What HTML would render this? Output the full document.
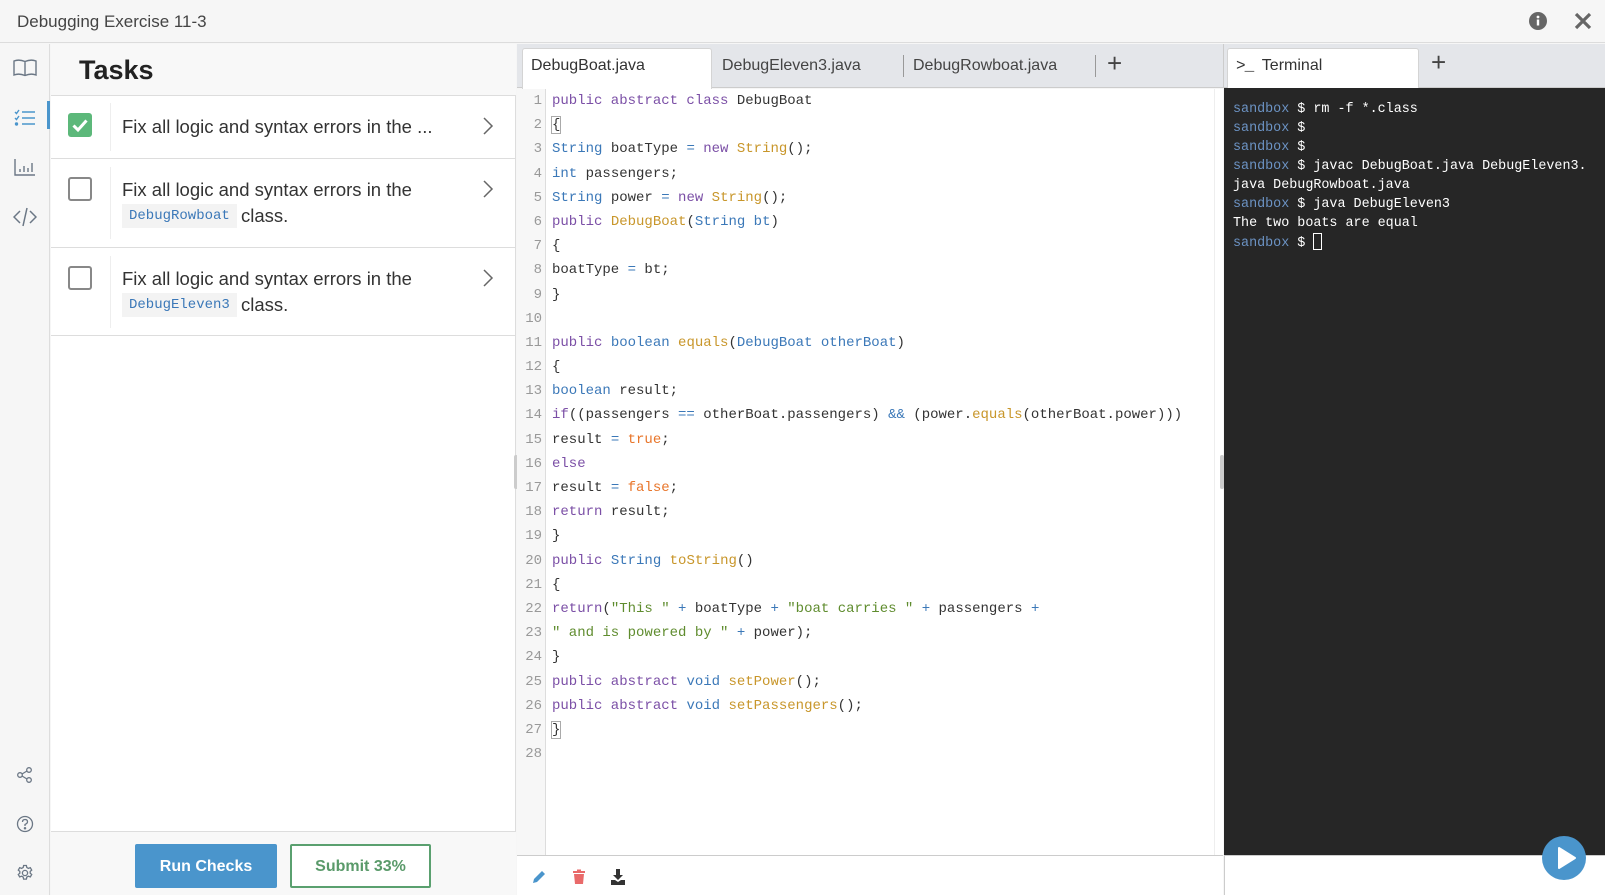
<!DOCTYPE html>
<html><head><meta charset="utf-8"><style>
*{box-sizing:border-box;margin:0;padding:0}
body{width:1605px;height:895px;overflow:hidden;background:#f6f6f6;font-family:"Liberation Sans",sans-serif;color:#333;position:relative}
.abs{position:absolute}
.mono{font-family:"Liberation Mono","DejaVu Sans Mono",monospace}
.kw{color:#7b4fa6}.ty{color:#3b78b8}.fn{color:#c8962a}.st{color:#5f8c2e}.bo{color:#e8752a}.op{color:#3b78b8}
.code div{height:24.2px;line-height:24.2px;white-space:pre}
.gut div{height:24.2px;line-height:24.2px;text-align:right;padding-right:4px}
.term div{height:19px;line-height:19px;white-space:pre}
.sb{color:#6c93c4}
</style></head><body>
<div class="abs" style="left:0;top:0;width:1605px;height:43px;background:#f6f6f6;border-bottom:1px solid #dcdcdc"></div>
<div class="abs" style="left:17px;top:12px;font-size:17px;color:#444">Debugging Exercise 11-3</div>
<svg class="abs" style="left:1528px;top:11px" width="20" height="20" viewBox="0 0 20 20"><circle cx="10" cy="10" r="9" fill="#666"/><rect x="8.8" y="8.5" width="2.4" height="6" fill="#fff"/><circle cx="10" cy="6" r="1.4" fill="#fff"/></svg>
<svg class="abs" style="left:1573px;top:11px" width="20" height="20" viewBox="0 0 20 20"><path d="M3 3L17 17M17 3L3 17" stroke="#666" stroke-width="3.2"/></svg>

<div class="abs" style="left:0;top:44px;width:50px;height:851px;background:#f6f6f6;border-right:1px solid #ddd"></div>
<svg class="abs" style="left:13px;top:59px" width="24" height="18" viewBox="0 0 24 18" fill="none" stroke="#6b7785" stroke-width="1.4"><path d="M1 2Q6 0 12 2.5Q18 0 23 2V16Q18 14 12 16.5Q6 14 1 16Z M12 2.5V16.5"/></svg>
<svg class="abs" style="left:14px;top:109px" width="22" height="18" viewBox="0 0 22 18" fill="none" stroke="#4a95cc" stroke-width="1.4"><path d="M1 3l1.5 1.5L5 1M1 9l1.5 1.5L5 7M8 3H21M8 9H21M8 15H21"/><circle cx="2.5" cy="15" r="1" fill="#4a95cc"/></svg>
<div class="abs" style="left:47px;top:101px;width:3px;height:28px;background:#4a95cc"></div>
<svg class="abs" style="left:14px;top:158px" width="22" height="18" viewBox="0 0 22 18" fill="none" stroke="#6b7785" stroke-width="1.4"><path d="M1 1V17H21M6 14V11M10 14V8M14 14V10M18 14V5"/></svg>
<svg class="abs" style="left:13px;top:207px" width="24" height="20" viewBox="0 0 24 20" fill="none" stroke="#6b7785" stroke-width="1.5"><path d="M7 4L1 10L7 16M17 4L23 10L17 16M14 1L10 19"/></svg>
<svg class="abs" style="left:16px;top:766px" width="18" height="18" viewBox="0 0 18 18" fill="none" stroke="#6b7785" stroke-width="1.3"><circle cx="4" cy="9" r="2.3"/><circle cx="13" cy="4" r="2.3"/><circle cx="13" cy="14" r="2.3"/><path d="M6 8L11 5M6 10L11 13"/></svg>
<svg class="abs" style="left:16px;top:815px" width="18" height="18" viewBox="0 0 18 18" fill="none" stroke="#6b7785" stroke-width="1.3"><circle cx="9" cy="9" r="7.5"/><path d="M6.5 7Q6.5 4.5 9 4.5Q11.5 4.5 11.5 6.8Q11.5 8.5 9 9.5V11"/><circle cx="9" cy="13.3" r=".6" fill="#6b7785"/></svg>
<svg class="abs" style="left:16px;top:864px" width="18" height="18" viewBox="0 0 18 18" fill="none" stroke="#6b7785" stroke-width="1.3"><circle cx="9" cy="9" r="2.6"/><path d="M7.6 1.5h2.8l.4 2 1.6.9 1.9-.7 1.4 2.4-1.5 1.3v1.8l1.5 1.3-1.4 2.4-1.9-.7-1.6.9-.4 2H7.6l-.4-2-1.6-.9-1.9.7-1.4-2.4 1.5-1.3V7.4L2.3 6.1l1.4-2.4 1.9.7 1.6-.9z"/></svg>

<div class="abs" style="left:51px;top:44px;width:465px;height:851px;background:#fff;border-right:1px solid #ddd"></div>
<div class="abs" style="left:51px;top:44px;width:465px;height:52px;background:#f8f8f8;border-bottom:1px solid #ddd"></div>
<div class="abs" style="left:79px;top:55px;font-size:27px;font-weight:bold;color:#222">Tasks</div>
<div class="abs" style="left:51px;top:158px;width:465px;height:1px;background:#ddd"></div>
<div class="abs" style="left:110px;top:103px;width:1px;height:48px;background:#eee"></div>
<div class="abs" style="left:68px;top:113px;width:24px;height:24px;background:#5cb87a;border-radius:3px"></div>
<svg class="abs" style="left:68px;top:113px" width="24" height="24" viewBox="0 0 24 24"><path d="M5.5 12.5L10 17L18.5 7.5" stroke="#fff" stroke-width="3" fill="none"/></svg>
<div class="abs" style="left:122px;top:116px;font-size:18.5px;color:#333">Fix all logic and syntax errors in the ...</div>
<svg class="abs" style="left:482px;top:116px" width="12" height="20" viewBox="0 0 12 20"><path d="M2 2L10 10L2 18" stroke="#666" stroke-width="1.5" fill="none"/></svg>
<div class="abs" style="left:51px;top:247px;width:465px;height:1px;background:#ddd"></div>
<div class="abs" style="left:110px;top:167px;width:1px;height:72px;background:#eee"></div>
<div class="abs" style="left:68px;top:177px;width:24px;height:24px;border:2px solid #888;border-radius:3px"></div>
<div class="abs" style="left:122px;top:179px;font-size:18.5px;color:#333">Fix all logic and syntax errors in the</div>
<div class="abs mono" style="left:122px;top:204px;height:24px;line-height:24px;padding:0 7px;background:#f3f3f3;font-size:14px;color:#3b78b8">DebugRowboat</div>
<div class="abs" style="left:241px;top:205px;font-size:18.5px;color:#333">class.</div>
<svg class="abs" style="left:482px;top:179px" width="12" height="20" viewBox="0 0 12 20"><path d="M2 2L10 10L2 18" stroke="#666" stroke-width="1.5" fill="none"/></svg>
<div class="abs" style="left:51px;top:335px;width:465px;height:1px;background:#ddd"></div>
<div class="abs" style="left:110px;top:256px;width:1px;height:72px;background:#eee"></div>
<div class="abs" style="left:68px;top:266px;width:24px;height:24px;border:2px solid #888;border-radius:3px"></div>
<div class="abs" style="left:122px;top:268px;font-size:18.5px;color:#333">Fix all logic and syntax errors in the</div>
<div class="abs mono" style="left:122px;top:293px;height:24px;line-height:24px;padding:0 7px;background:#f3f3f3;font-size:14px;color:#3b78b8">DebugEleven3</div>
<div class="abs" style="left:241px;top:294px;font-size:18.5px;color:#333">class.</div>
<svg class="abs" style="left:482px;top:268px" width="12" height="20" viewBox="0 0 12 20"><path d="M2 2L10 10L2 18" stroke="#666" stroke-width="1.5" fill="none"/></svg>
<div class="abs" style="left:51px;top:831px;width:465px;height:64px;background:#f8f8f8;border-top:1px solid #ddd"></div>
<div class="abs" style="left:135px;top:844px;width:142px;height:44px;background:#4a95cc;border-radius:2px;color:#fff;font-size:16px;font-weight:bold;text-align:center;line-height:46px">Run Checks</div>
<div class="abs" style="left:290px;top:844px;width:141px;height:44px;border:2px solid #5aa06f;border-radius:2px;color:#5a9a6a;font-size:16px;font-weight:bold;text-align:center;line-height:42px;background:#fff">Submit 33%</div>
<div class="abs" style="left:514px;top:455px;width:4px;height:34px;background:#ccc;border-radius:2px"></div>

<div class="abs" style="left:517px;top:44px;width:706px;height:44px;background:#e4e6ea;border-bottom:1px solid #ccc"></div>
<div class="abs" style="left:522px;top:48px;width:190px;height:41px;background:#fff;border:1px solid #d4d4d4;border-bottom:none;border-radius:3px 3px 0 0"></div>
<div class="abs" style="left:531px;top:57px;font-size:16px;color:#333">DebugBoat.java</div>
<div class="abs" style="left:722px;top:57px;font-size:16px;color:#444">DebugEleven3.java</div>
<div class="abs" style="left:903px;top:55px;width:1px;height:22px;background:#999"></div>
<div class="abs" style="left:913px;top:57px;font-size:16px;color:#444">DebugRowboat.java</div>
<div class="abs" style="left:1095px;top:55px;width:1px;height:22px;background:#999"></div>
<div class="abs" style="left:1107px;top:48px;font-size:26px;color:#444;font-weight:300">+</div>
<div class="abs" style="left:517px;top:89px;width:706px;height:766px;background:#fff"></div>
<div class="abs" style="left:517px;top:89px;width:29px;height:766px;background:#f7f7f7;border-right:1px solid #ddd"></div>
<div class="abs" style="left:1214px;top:89px;width:1px;height:766px;background:#eee"></div>
<div class="abs gut mono" style="left:517px;top:89px;width:29px;font-size:14px;color:#999">
<div>1</div><div>2</div><div>3</div><div>4</div><div>5</div><div>6</div><div>7</div><div>8</div><div>9</div><div>10</div><div>11</div><div>12</div><div>13</div><div>14</div><div>15</div><div>16</div><div>17</div><div>18</div><div>19</div><div>20</div><div>21</div><div>22</div><div>23</div><div>24</div><div>25</div><div>26</div><div>27</div><div>28</div></div>
<div class="abs code mono" style="left:552px;top:89px;font-size:14px;color:#333">
<div><span class="kw">public abstract class</span> DebugBoat</div>
<div><span style="outline:1px solid #aaa">{</span></div>
<div><span class="ty">String</span> boatType <span class="op">=</span> <span class="kw">new</span> <span class="fn">String</span>();</div>
<div><span class="ty">int</span> passengers;</div>
<div><span class="ty">String</span> power <span class="op">=</span> <span class="kw">new</span> <span class="fn">String</span>();</div>
<div><span class="kw">public</span> <span class="fn">DebugBoat</span>(<span class="ty">String bt</span>)</div>
<div>{</div>
<div>boatType <span class="op">=</span> bt;</div>
<div>}</div>
<div> </div>
<div><span class="kw">public</span> <span class="ty">boolean</span> <span class="fn">equals</span>(<span class="ty">DebugBoat otherBoat</span>)</div>
<div>{</div>
<div><span class="ty">boolean</span> result;</div>
<div><span class="kw">if</span>((passengers <span class="op">==</span> otherBoat.passengers) <span class="op">&amp;&amp;</span> (power.<span class="fn">equals</span>(otherBoat.power)))</div>
<div>result <span class="op">=</span> <span class="bo">true</span>;</div>
<div><span class="kw">else</span></div>
<div>result <span class="op">=</span> <span class="bo">false</span>;</div>
<div><span class="kw">return</span> result;</div>
<div>}</div>
<div><span class="kw">public</span> <span class="ty">String</span> <span class="fn">toString</span>()</div>
<div>{</div>
<div><span class="kw">return</span>(<span class="st">"This "</span> <span class="op">+</span> boatType <span class="op">+</span> <span class="st">"boat carries "</span> <span class="op">+</span> passengers <span class="op">+</span></div>
<div><span class="st">" and is powered by "</span> <span class="op">+</span> power);</div>
<div>}</div>
<div><span class="kw">public abstract</span> <span class="ty">void</span> <span class="fn">setPower</span>();</div>
<div><span class="kw">public abstract</span> <span class="ty">void</span> <span class="fn">setPassengers</span>();</div>
<div><span style="outline:1px solid #aaa">}</span></div>
<div> </div>
</div>
<div class="abs" style="left:517px;top:855px;width:706px;height:40px;background:#fff;border-top:1px solid #ccc"></div>
<svg class="abs" style="left:531px;top:869px" width="16" height="16" viewBox="0 0 16 16"><path d="M2 14l1-4 8-8 3 3-8 8z" fill="#4a95cc"/></svg>
<svg class="abs" style="left:571px;top:869px" width="16" height="16" viewBox="0 0 16 16"><path d="M2 2h12v2H2zM6 0.5h4v2H6zM3 5h10l-1 10H4z" fill="#e96a6a"/></svg>
<svg class="abs" style="left:610px;top:869px" width="16" height="16" viewBox="0 0 16 16"><path d="M6 0h4v6h3l-5 5-5-5h3z M1 11h4l3 2 3-2h4v5H1z" fill="#333"/></svg>
<div class="abs" style="left:1220px;top:455px;width:4px;height:34px;background:#ccc;border-radius:2px"></div>

<div class="abs" style="left:1223px;top:44px;width:382px;height:44px;background:#e4e6ea;border-bottom:1px solid #ccc;border-left:1px solid #ccc"></div>
<div class="abs" style="left:1227px;top:48px;width:192px;height:41px;background:#fff;border:1px solid #d4d4d4;border-bottom:none;border-radius:3px 3px 0 0"></div>
<div class="abs" style="left:1236px;top:57px;font-size:16px;color:#333"><span class="mono" style="letter-spacing:-1px">&gt;_</span>&nbsp; Terminal</div>
<div class="abs" style="left:1431px;top:47px;font-size:26px;color:#444">+</div>
<div class="abs" style="left:1224px;top:88px;width:381px;height:767px;background:#262626"></div>
<div class="abs term mono" style="left:1233px;top:100px;font-size:13.4px;color:#fff">
<div><span class="sb">sandbox</span> $ rm -f *.class</div>
<div><span class="sb">sandbox</span> $</div>
<div><span class="sb">sandbox</span> $</div>
<div><span class="sb">sandbox</span> $ javac DebugBoat.java DebugEleven3.</div>
<div>java DebugRowboat.java</div>
<div><span class="sb">sandbox</span> $ java DebugEleven3</div>
<div>The two boats are equal</div>
<div><span class="sb">sandbox</span> $ <span style="display:inline-block;width:9px;height:17px;border:1px solid #fff;vertical-align:-4px"></span></div>
</div>
<div class="abs" style="left:1224px;top:855px;width:381px;height:40px;background:#fff;border-top:1px solid #ccc;border-left:1px solid #ccc"></div>
<div class="abs" style="left:1542px;top:836px;width:44px;height:44px;border-radius:50%;background:#4a95cc"></div>
<svg class="abs" style="left:1542px;top:836px" width="44" height="44" viewBox="0 0 44 44"><path d="M17 12L33 22L17 32Z" fill="#fff" stroke="#fff" stroke-width="2" stroke-linejoin="round"/></svg>
</body></html>
